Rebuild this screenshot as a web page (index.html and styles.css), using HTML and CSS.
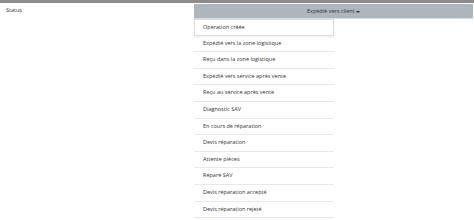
FILE: index.html
```html
<!DOCTYPE html>
<html>
<head>
<meta charset="utf-8">
<link rel="stylesheet" href="styles.css">
</head>
<body>
<div class="topbar"></div>
<div class="row">
  <div class="label">Status</div>
  <div class="field">
    <button class="toggle">Expédié vers client <span class="caret"></span></button>
    <ul class="menu">
      <li class="item active">Operation créée</li>
      <li class="item">Expédié vers la zone logistique</li>
      <li class="item">Reçu dans la zone logistique</li>
      <li class="item">Expédié vers service après vente</li>
      <li class="item">Reçu au service après vente</li>
      <li class="item">Diagnostic SAV</li>
      <li class="item">En cours de réparation</li>
      <li class="item">Devis réparation</li>
      <li class="item">Attente pièces</li>
      <li class="item">Réparé SAV</li>
      <li class="item">Devis réparation accepté</li>
      <li class="item">Devis réparation rejeté</li>
    </ul>
  </div>
</div>
</body>
</html>
```
FILE: styles.css
```css
html, body {
  margin: 0;
  padding: 0;
  background: #fff;
  font-family: "Open Sans", "Liberation Sans", sans-serif;
  color: #333;
  overflow: hidden;
}
.topbar {
  height: 3px;
  background: #8c8c8c;
}
.row {
  display: flex;
  align-items: flex-start;
}
.label {
  width: 194px;
  padding: 3px 0 0 6px;
  box-sizing: border-box;
  font-size: 5.5px;
  line-height: 8px;
}
.field {
  flex: 1;
  display: flex;
  flex-direction: column;
}
.toggle {
  margin: 1px 1px 0 0;
  height: 15px;
  border: 0;
  border-bottom: 1px solid #d8dde2;
  background: #adb5bd;
  color: #333;
  font-family: inherit;
  font-size: 5.5px;
  padding: 0;
  text-align: center;
}
.caret {
  display: inline-block;
  width: 0;
  height: 0;
  border-left: 2px solid transparent;
  border-right: 2px solid transparent;
  border-top: 2.5px solid #333;
  vertical-align: middle;
}
.menu {
  list-style: none;
  margin: 0;
  padding: 0;
  width: 140px;
}
.item {
  height: 15.6px;
  line-height: 15.6px;
  padding-left: 9px;
  font-size: 5.5px;
  border-bottom: 1px solid #e8e8e8;
  white-space: nowrap;
}
.item.active {
  border: 1px solid #dcdcdc;
  height: 14.6px;
  line-height: 14.6px;
  padding-left: 8px;
  box-shadow: 0 1px 2px rgba(0,0,0,0.08);
}
```
